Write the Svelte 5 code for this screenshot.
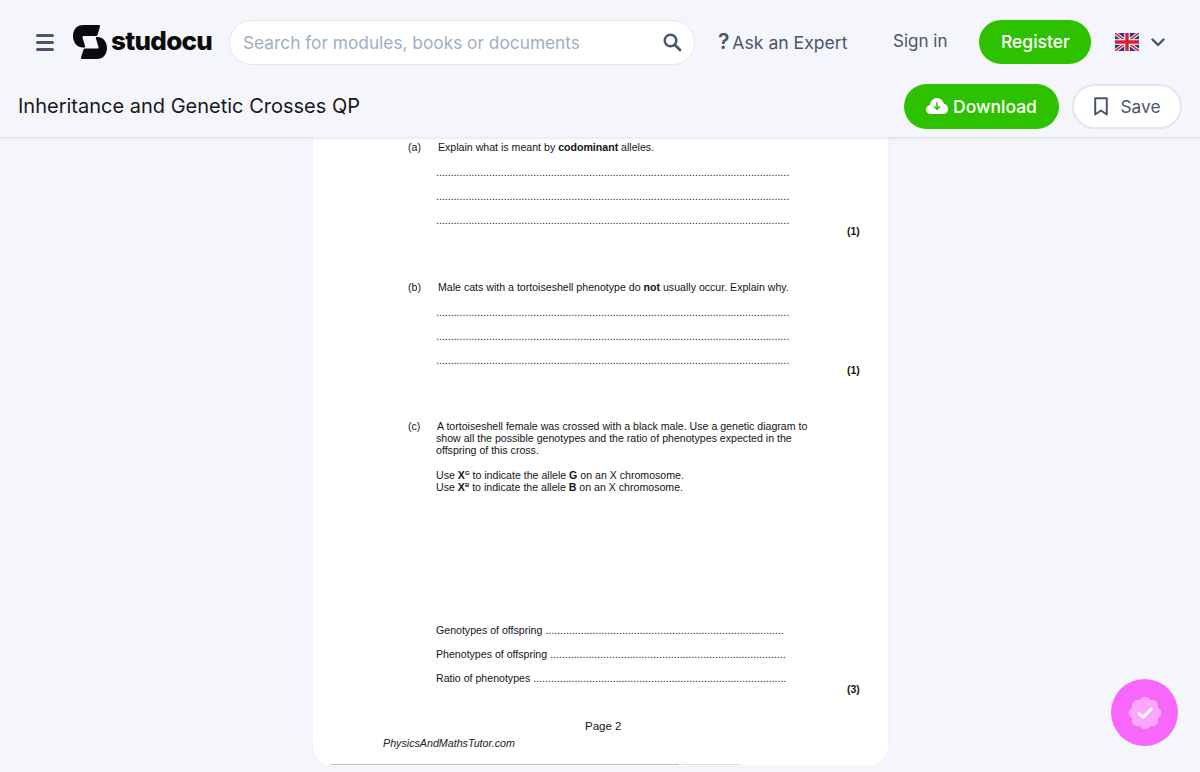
<script lang="ts">
  const dots = [0, 1, 2];
  const dotRun = (n: number) => '.'.repeat(n);
  const lobes = [0, 45, 90, 135, 180, 225, 270, 315];
</script>

{#snippet answerLines()}
  <div class="lines">
    {#each dots as d (d)}
      <div class="dotline">{dotRun(120)}</div>
    {/each}
  </div>
{/snippet}

<div class="page">
  <header class="topbar">
    <div class="nav-row">
      <button class="burger" aria-label="Menu">
        <span></span><span></span><span></span>
      </button>
      <div class="logo">
        <svg width="36" height="36" viewBox="0 0 36 36" aria-hidden="true">
          <path fill="#0b0b0b" d="M11 1 H27 Q28.500 1 28 2.500 L25.500 11 Q25 12 24 12 H11.500 Q10 12 10.500 13.500 L13.200 22.500 Q13.500 23.500 12.500 23.500 H11 C4.500 23.500 1 18 1 12 C1 5.500 5 1 11 1 Z" />
          <path fill="#0b0b0b" d="M24.500 13 H25 C31 13 35 17.500 35 24 C35 30.500 31 35 25 35 H10 Q8.500 35 9 33.500 L11.500 25.500 Q12 24.500 13 24.500 H25.500 Q27 24.500 26.500 23 L23.800 14 Q23.500 13 24.500 13 Z" />
        </svg>
        <span class="wordmark">studocu</span>
      </div>
      <div class="search">
        <span class="placeholder">Search for modules, books or documents</span>
        <svg width="20" height="20" viewBox="0 0 20 20" aria-hidden="true">
          <circle cx="8.500" cy="8.500" r="5.800" fill="none" stroke="#4a5568" stroke-width="2.400" />
          <path d="M13 13 L18 18" stroke="#4a5568" stroke-width="2.800" stroke-linecap="round" />
        </svg>
      </div>
      <a class="expert" href="#top"><b>?</b> Ask an Expert</a>
      <a class="signin" href="#top">Sign in</a>
      <button class="register">Register</button>
      <svg class="flag" width="24" height="18" viewBox="0 0 24 18" aria-hidden="true">
        <rect width="24" height="18" fill="#2b3a80" />
        <path d="M0 0 L24 18 M24 0 L0 18" stroke="#fff" stroke-width="3.400" />
        <path d="M0 0 L24 18 M24 0 L0 18" stroke="#d3203a" stroke-width="1.600" />
        <path d="M12 0 V18 M0 9 H24" stroke="#fff" stroke-width="5.400" />
        <path d="M12 0 V18 M0 9 H24" stroke="#d3203a" stroke-width="3.400" />
      </svg>
      <svg class="chevron" width="14" height="9" viewBox="0 0 14 9" aria-hidden="true">
        <path d="M1.500 1.500 L7 7 L12.500 1.500" fill="none" stroke="#4a5568" stroke-width="2.400" stroke-linecap="round" stroke-linejoin="round" />
      </svg>
    </div>
    <div class="title-row">
      <h1>Inheritance and Genetic Crosses QP</h1>
      <button class="download">
        <svg width="22" height="16" viewBox="0 0 22 16" aria-hidden="true">
          <path fill="#fff" d="M5 16 C2 16 0 14 0 11.500 C0 9 1.800 7.400 4 7 C4.500 3 7.500 0 11 0 C14.500 0 17 2.500 17.800 5.600 C20.300 6 22 8.300 22 11 C22 14 20 16 17 16 Z" />
          <path d="M11 5 V11 M8.500 8.800 L11 11.300 L13.500 8.800" fill="none" stroke="#2dc100" stroke-width="1.600" stroke-linecap="round" stroke-linejoin="round" />
        </svg>
        Download
      </button>
      <button class="save">
        <svg width="14" height="19" viewBox="0 0 14 19" aria-hidden="true">
          <path d="M1.200 1.200 H12.800 V17.500 L7 13.500 L1.200 17.500 Z" fill="none" stroke="#4a5568" stroke-width="2" stroke-linejoin="round" />
        </svg>
        Save
      </button>
    </div>
  </header>

  <main class="viewer">
    <article class="paper">
      <section class="question qa">
        <div class="q-head"><span class="label">(a)</span><p class="lead">Explain what is meant by <b>codominant</b> alleles.</p></div>
        {@render answerLines()}
        <div class="mark">(1)</div>
      </section>

      <section class="question qb">
        <div class="q-head"><span class="label">(b)</span><p class="lead">Male cats with a tortoiseshell phenotype do <b>not</b> usually occur. Explain why.</p></div>
        {@render answerLines()}
        <div class="mark">(1)</div>
      </section>

      <section class="question qc">
        <div class="q-head">
          <span class="label">(c)</span>
          <p class="para">A tortoiseshell female was crossed with a black male. Use a genetic diagram to<br />show all the possible genotypes and the ratio of phenotypes expected in the<br />offspring of this cross.</p>
        </div>
        <div class="q-head use">
          <span class="label"></span>
          <p class="para">Use <b>X<sup>G</sup></b> to indicate the allele <b>G</b> on an X chromosome.<br />Use <b>X<sup>B</sup></b> to indicate the allele <b>B</b> on an X chromosome.</p>
        </div>
      </section>

      <section class="results">
        <div class="result"><span>Genotypes of offspring</span><span>{dotRun(81)}</span></div>
        <div class="result"><span>Phenotypes of offspring</span><span>{dotRun(80)}</span></div>
        <div class="result"><span>Ratio of phenotypes</span><span>{dotRun(86)}</span></div>
        <div class="mark last">(3)</div>
      </section>

      <div class="page-no">Page 2</div>
      <div class="source">PhysicsAndMathsTutor.com</div>
      <div class="bleed"><span></span><em></em></div>
    </article>
  </main>

  <button class="fab" aria-label="Verified">
    <svg width="36" height="36" viewBox="0 0 36 36" aria-hidden="true">
      <g fill="#fba6ff">
        <circle cx="18" cy="18" r="12" />
        {#each lobes as a (a)}
          <circle cx="18" cy="7.500" r="5.800" transform="rotate({a} 18 18)" />
        {/each}
      </g>
      <path d="M12 18.500 L16.200 22.200 L24.300 14" fill="none" stroke="#fff" stroke-width="3" stroke-linecap="round" stroke-linejoin="round" />
    </svg>
  </button>
</div>

<style>
  :global(body) {
    margin: 0;
    background: #f5f6fb;
  }
  .page {
    width: 1200px;
    height: 772px;
    overflow: hidden;
    position: relative;
    background: #f5f6fb;
    font-family: "Inter", "Liberation Sans", sans-serif;
  }
  button {
    font-family: inherit;
    border: 0;
    cursor: pointer;
  }
  a {
    text-decoration: none;
    color: #4a5568;
  }
  .topbar {
    height: 137px;
    background: #f5f6fb;
    box-shadow: 0 1px 3px rgba(40, 50, 80, 0.16);
    position: relative;
    z-index: 2;
  }
  .nav-row {
    height: 84px;
    display: flex;
    align-items: center;
    padding-left: 36px;
  }
  .burger {
    width: 18px;
    height: 17px;
    padding: 0;
    background: none;
    display: flex;
    flex-direction: column;
    justify-content: space-between;
  }
  .burger span {
    height: 3px;
    border-radius: 2px;
    background: #4a5568;
  }
  .logo {
    display: flex;
    align-items: center;
    margin-left: 18px;
    width: 141px;
  }
  .wordmark {
    font-weight: 800;
    font-size: 26px;
    letter-spacing: -0.7px;
    color: #0b0b0b;
    margin-left: 3px;
    margin-top: -3px;
  }
  .search {
    width: 466px;
    height: 45px;
    box-sizing: border-box;
    margin-left: 16px;
    padding: 0 12px 0 13px;
    display: flex;
    align-items: center;
    justify-content: space-between;
    background: #fff;
    border: 1px solid #e2e6ee;
    border-radius: 23px;
  }
  .placeholder {
    font-size: 17.300px;
    color: #a0aec0;
  }
  .expert {
    margin-left: 23px;
    margin-top: -2px;
    font-size: 17.600px;
    width: 175px;
  }
  .expert b {
    font-size: 21px;
    font-weight: 600;
    letter-spacing: -2px;
  }
  .signin {
    font-size: 17px;
    margin-top: -2px;
  }
  .register {
    width: 112px;
    height: 44px;
    margin-left: 32px;
    margin-top: -1px;
    border-radius: 22px;
    background: #2dc100;
    color: #fff;
    font-size: 17.500px;
    font-weight: 500;
  }
  .flag {
    margin-left: 24px;
  }
  .chevron {
    margin-left: 12px;
  }
  .title-row {
    height: 45px;
    display: flex;
    align-items: center;
    padding: 0 18px;
  }
  h1 {
    margin: -2px auto 0 0;
    font-size: 20px;
    font-weight: 400;
    color: #16181d;
  }
  .download {
    width: 155px;
    height: 45px;
    border-radius: 23px;
    background: #2dc100;
    color: #fff;
    font-size: 17.500px;
    font-weight: 500;
    display: flex;
    align-items: center;
    justify-content: center;
    gap: 5px;
    padding: 0 0 1px;
  }
  .save {
    width: 110px;
    height: 45px;
    margin-left: 13px;
    border-radius: 23px;
    box-sizing: border-box;
    background: #fff;
    border: 2px solid #e2e6ee;
    color: #4a5568;
    font-size: 17.300px;
    font-weight: 400;
    display: flex;
    align-items: center;
    justify-content: center;
    gap: 13px;
    padding: 0 0 1px;
  }
  .viewer {
    display: flex;
    justify-content: center;
    padding-left: 1px;
  }
  .paper {
    width: 575px;
    height: 629px;
    box-sizing: border-box;
    padding: 4px 0 0 95px;
    background: #fff;
    border-radius: 0 0 20px 20px;
    box-shadow: 0 0 2px rgba(40, 50, 80, 0.08);
    position: relative;
    overflow: hidden;
    font-family: "Liberation Sans", Arial, sans-serif;
    font-size: 10.600px;
    line-height: 12px;
    color: #141414;
  }
  .question {
    width: 453px;
  }
  .q-head {
    display: flex;
  }
  .label {
    width: 28px;
    flex: none;
  }
  p {
    margin: 0;
  }
  .lead {
    margin-left: 2px;
  }
  .para {
    line-height: 12px;
    text-indent: 1px;
  }
  .use .para {
    text-indent: 0;
  }
  .lines {
    margin: 13px 0 0 28px;
    display: flex;
    flex-direction: column;
    gap: 12px;
  }
  .dotline {
    height: 12px;
    white-space: nowrap;
  }
  .mark {
    margin: -1px 0 0 439px;
    font-weight: bold;
    font-size: 10.500px;
  }
  .qb {
    margin-top: 44px;
  }
  .qb .mark {
    margin-top: -2px;
  }
  .qc {
    margin-top: 44px;
  }
  .use {
    margin-top: 13px;
  }
  sup {
    font-size: 6px;
    line-height: 0;
    vertical-align: 4px;
  }
  .results {
    margin: 131px 0 0 28px;
    width: 425px;
  }
  .result {
    height: 24px;
    display: flex;
    gap: 3px;
    white-space: nowrap;
  }
  .mark.last {
    margin: -13px 0 0 411px;
  }
  .page-no {
    margin: 25px 0 0 177px;
    font-size: 11.500px;
    color: #111;
  }
  .source {
    margin: 5px 0 0 -25px;
    font-style: italic;
    font-size: 10.700px;
    color: #222;
  }
  .bleed {
    position: absolute;
    left: 18px;
    bottom: 1px;
    display: flex;
    gap: 2px;
  }
  .bleed span {
    width: 348px;
    height: 1px;
    background: #bbb;
  }
  .bleed em {
    width: 60px;
    height: 1px;
    background: #ddd;
  }
  .fab {
    position: absolute;
    left: 1111px;
    top: 679px;
    width: 67px;
    height: 67px;
    padding: 0;
    border-radius: 50%;
    background: #f767fb;
    display: flex;
    align-items: center;
    justify-content: center;
  }
</style>
